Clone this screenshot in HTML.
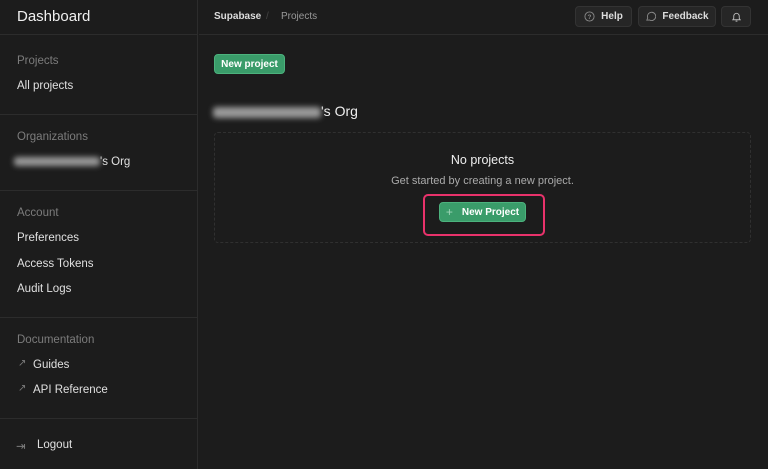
<!DOCTYPE html><html><head><style>
*{margin:0;padding:0;box-sizing:border-box}
body{width:768px;height:469px;background:#1c1c1c;font-family:"Liberation Sans",sans-serif;color:#ededed;position:relative;overflow:hidden}
.a{position:absolute;white-space:nowrap}
.side{position:absolute;left:0;top:0;width:198px;height:469px;border-right:1px solid #2c2c2c}
.hl{position:absolute;left:0;width:198px;height:1px;background:#2c2c2c}
.lab{font-size:11.5px;color:#7c7c7c}
.it{font-size:11.5px;color:#e0e0e0}
.blur{display:inline-block;background:#9a9a9a;filter:blur(3px);height:9px;vertical-align:middle;border-radius:3px}
.btn{position:absolute;top:6px;height:21px;border:1px solid #333;background:#262626;border-radius:4px;font-size:10px;font-weight:bold;color:#ddd;display:flex;align-items:center;justify-content:center;gap:6px}
.g{position:absolute;background:#3a9c6a;border:1px solid #4cb27d;border-radius:4px;font-size:10px;font-weight:bold;color:#fff;display:flex;align-items:center;justify-content:center}
</style></head><body>
<div class="side">
<div class="a" style="left:17px;top:8px;font-size:15px;color:#f0f0f0">Dashboard</div>
<div class="hl" style="top:34px"></div>
<div class="a lab" style="left:17px;top:55px">Projects</div>
<div class="a it" style="left:17px;top:80px">All projects</div>
<div class="hl" style="top:114px"></div>
<div class="a lab" style="left:17px;top:131px">Organizations</div>
<div class="a it" style="left:14px;top:156px"><span class="blur" style="width:86px"></span>'s Org</div>
<div class="hl" style="top:190px"></div>
<div class="a lab" style="left:17px;top:207px">Account</div>
<div class="a it" style="left:17px;top:232px">Preferences</div>
<div class="a it" style="left:17px;top:258px">Access Tokens</div>
<div class="a it" style="left:17px;top:283px">Audit Logs</div>
<div class="hl" style="top:317px"></div>
<div class="a lab" style="left:17px;top:334px">Documentation</div>
<div class="a lab" style="left:18px;top:358px;font-size:10px">↗</div>
<div class="a it" style="left:33px;top:359px">Guides</div>
<div class="a lab" style="left:18px;top:383px;font-size:10px">↗</div>
<div class="a it" style="left:33px;top:384px">API Reference</div>
<div class="hl" style="top:418px"></div>
<div class="a lab" style="left:16px;top:439px">⇥</div>
<div class="a it" style="left:37px;top:439px">Logout</div>
</div>
<div class="a" style="left:199px;top:34px;width:569px;height:1px;background:#2c2c2c"></div>
<div class="a" style="left:214px;top:11px;font-size:10px;font-weight:bold;color:#ddd">Supabase</div>
<div class="a" style="left:266px;top:11px;font-size:10px;color:#444">/</div>
<div class="a" style="left:281px;top:11px;font-size:10px;color:#999">Projects</div>
<div class="btn" style="left:575px;width:57px"><svg width="11" height="11" viewBox="0 0 12 12"><circle cx="6" cy="6" r="5" fill="none" stroke="#888"/><text x="6" y="8.5" font-size="7" fill="#888" text-anchor="middle">?</text></svg>Help</div>
<div class="btn" style="left:638px;width:78px"><svg width="11" height="11" viewBox="0 0 12 12"><path d="M2 10 L3 7.5 A4.5 4.5 0 1 1 5 9.8 Z" fill="none" stroke="#888"/></svg>Feedback</div>
<div class="btn" style="left:721px;width:30px"><svg width="11" height="12" viewBox="0 0 12 13"><path d="M2 9.5h8l-1-1.5V5.5a3 3 0 0 0-6 0V8z M5 11h2" fill="none" stroke="#bbb"/></svg></div>
<div class="g" style="left:214px;top:54px;width:71px;height:20px">New project</div>
<div class="a" style="left:213px;top:103px;font-size:14px;color:#eee"><span class="blur" style="width:108px;height:11px"></span>'s Org</div>
<div class="a" style="left:214px;top:132px;width:537px;height:111px;border:1px dashed #303030;border-radius:4px"></div>
<div class="a" style="left:214px;top:153px;width:537px;text-align:center;font-size:12.5px;color:#eee">No projects</div>
<div class="a" style="left:214px;top:175px;width:537px;text-align:center;font-size:11px;color:#aaa">Get started by creating a new project.</div>
<div class="a" style="left:423px;top:194px;width:122px;height:42px;border:2px solid #e8326b;border-radius:5px"></div>
<div class="g" style="left:439px;top:202px;width:87px;height:20px"><span style="color:#9fd5b8;margin-right:9px;font-weight:normal;font-size:12px">+</span>New Project</div>
</body></html>
